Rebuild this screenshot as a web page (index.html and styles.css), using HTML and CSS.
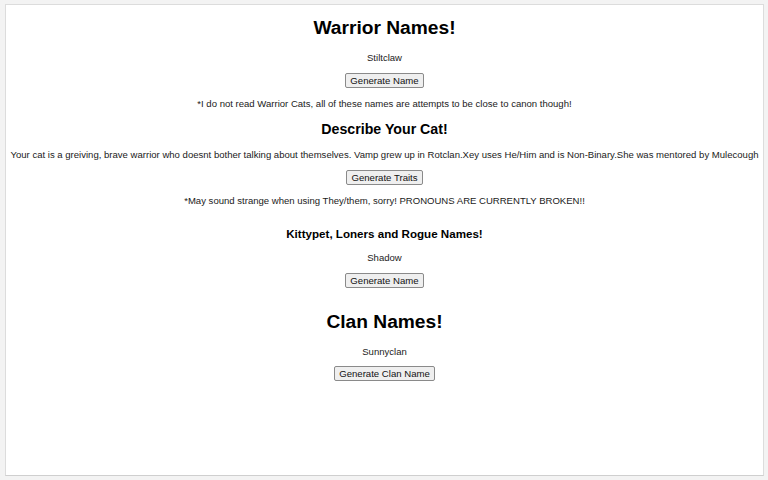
FILE: index.html
```html
<!DOCTYPE html>
<html>
<head>
<meta charset="utf-8">
<link rel="stylesheet" href="styles.css">
</head>
<body>
<div class="frame">
  <main class="page">
    <h1 class="title t-first">Warrior Names!</h1>
    <p class="text tall m12">Stiltclaw</p>
    <button class="btn m8">Generate Name</button>
    <p class="text tall m9">*I do not read Warrior Cats, all of these names are attempts to be close to canon though!</p>

    <h2 class="subtitle m10">Describe Your Cat!</h2>
    <p class="text m12">Your cat is a greiving, brave warrior who doesnt bother talking about themselves. Vamp grew up in Rotclan.Xey uses He/Him and is Non-Binary.She was mentored by Mulecough</p>
    <button class="btn m9">Generate Traits</button>
    <p class="text m10">*May sound strange when using They/them, sorry! PRONOUNS ARE CURRENTLY BROKEN!!</p>

    <h3 class="minor m20">Kittypet, Loners and Rogue Names!</h3>
    <p class="text tall m10">Shadow</p>
    <button class="btn m8">Generate Name</button>

    <h1 class="title m23">Clan Names!</h1>
    <p class="text tall m12">Sunnyclan</p>
    <button class="btn m7">Generate Clan Name</button>
  </main>
</div>
</body>
</html>
```

FILE: styles.css
```css
html, body {
  margin: 0;
  padding: 0;
  height: 100%;
}
body {
  background: #f3f3f3;
  font-family: "Liberation Sans", Arial, sans-serif;
  color: #1a1a1a;
}
.frame {
  box-sizing: border-box;
  height: 480px;
  padding: 4px 4px 4px 5px;
}
.page {
  box-sizing: border-box;
  height: 472px;
  background: #fff;
  border: 1px solid #dcdcdc;
  border-bottom-color: #cfcfcf;
  display: flex;
  flex-direction: column;
  align-items: center;
  text-align: center;
}
.title {
  font-size: 19.2px;
  line-height: 22px;
  font-weight: bold;
  color: #000;
  margin: 0;
}
.t-first { margin-top: 12px; }
.subtitle {
  font-size: 14.2px;
  line-height: 16px;
  font-weight: bold;
  color: #000;
  margin: 0;
}
.minor {
  font-size: 11.6px;
  line-height: 14px;
  font-weight: bold;
  color: #000;
  margin: 0;
}
.text {
  font-size: 9.56px;
  line-height: 12px;
  margin: 0;
  white-space: nowrap;
}
.tall {
  line-height: 14px;
}
.btn {
  box-sizing: border-box;
  height: 15px;
  font-family: "Liberation Sans", Arial, sans-serif;
  font-size: 9.6px;
  line-height: 11px;
  color: #111;
  padding: 0 4px;
  background: #efefef;
  border: 1px solid #8a8a8a;
  border-radius: 2px;
}
.m7 { margin-top: 7px; }
.m8 { margin-top: 8px; }
.m9 { margin-top: 9px; }
.m10 { margin-top: 10px; }
.m12 { margin-top: 12px; }
.m20 { margin-top: 20px; }
.m23 { margin-top: 23px; }
```
